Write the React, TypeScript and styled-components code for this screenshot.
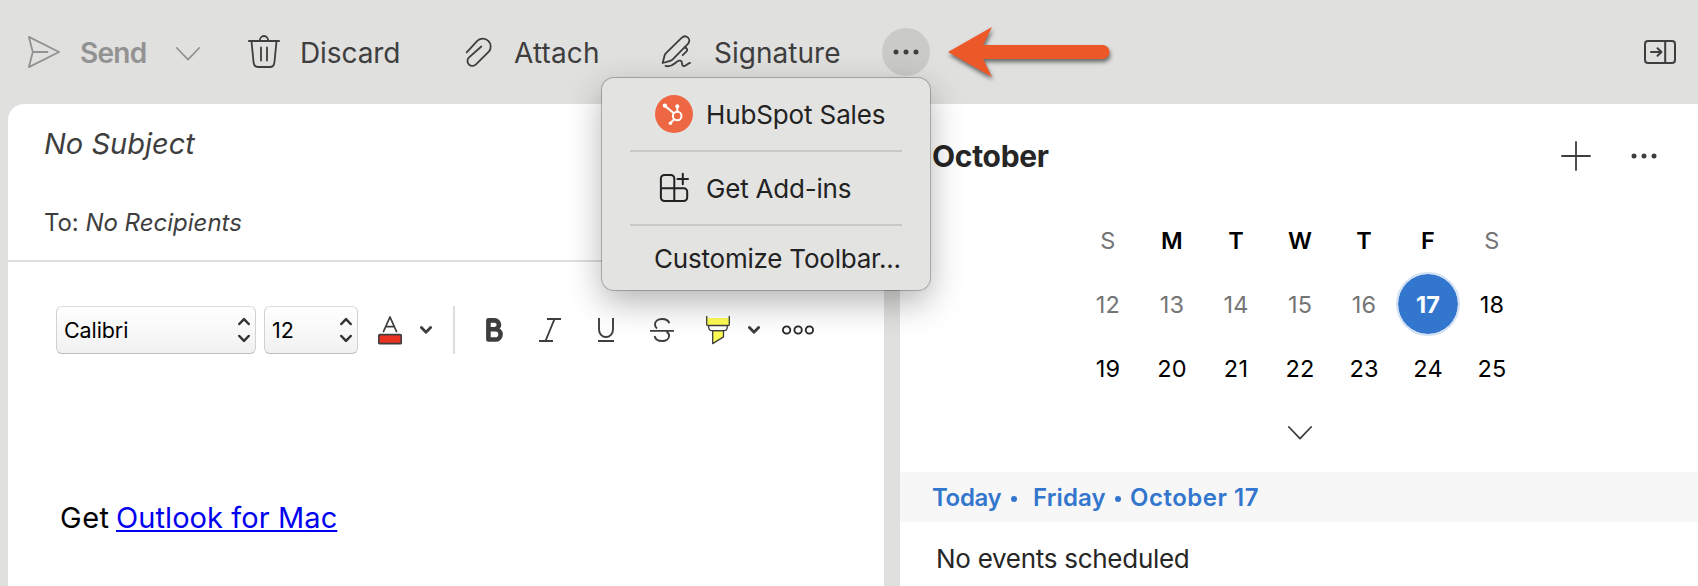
import React from "react";
import styled, { createGlobalStyle } from "styled-components";

const GlobalStyle = createGlobalStyle`
  *, *::before, *::after { box-sizing: border-box; }
  body {
    margin: 0;
    overflow: hidden;
    font-family: Inter, "Liberation Sans", sans-serif;
    color: #262626;
  }
`;

const Window = styled.div`
  display: flex;
  flex-direction: column;
  height: 586px;
  background: #e0e0de;
  overflow: hidden;
`;

const Icon = styled.svg<{ $stroke?: number }>`
  display: block;
  flex: none;
  fill: none;
  stroke: currentColor;
  stroke-width: ${(p) => p.$stroke ?? 1.8};
  stroke-linecap: round;
  stroke-linejoin: round;
`;

/* ---------- Toolbar ---------- */

const Toolbar = styled.header`
  display: flex;
  align-items: center;
  flex: none;
  height: 104px;
  padding: 0 22px 0 28px;
`;

const ToolButton = styled.div<{ $width: number; $gap: number; $disabled?: boolean }>`
  display: flex;
  align-items: center;
  flex: none;
  gap: ${(p) => p.$gap}px;
  width: ${(p) => p.$width}px;
  color: ${(p) => (p.$disabled ? "#929292" : "#3e3e3e")};
`;

const ToolLabel = styled.span<{ $tracking?: number; $bold?: boolean }>`
  font-size: 28px;
  line-height: 34px;
  padding-top: 2px;
  font-weight: ${(p) => (p.$bold ? 600 : 440)};
  letter-spacing: ${(p) => p.$tracking ?? 0}px;
  white-space: nowrap;
`;

const SendArrow = styled.div`
  margin-left: 9px;
  padding-top: 3px;
`;

const MoreAnchor = styled.div`
  position: relative;
  flex: none;
  z-index: 2;
`;

const MoreButton = styled.div`
  display: grid;
  place-items: center;
  width: 48px;
  height: 48px;
  border-radius: 50%;
  background: #cacac8;
  color: #3e3e3e;
`;

const Pointer = styled.svg`
  display: block;
  flex: none;
  margin-left: 18px;
  overflow: visible;
  filter: drop-shadow(1px 3px 2px rgba(0, 0, 0, 0.55));
`;

const PanelToggle = styled.div`
  margin-left: auto;
  color: #3e3e3e;
`;

/* ---------- Overflow menu ---------- */

const Menu = styled.div`
  position: absolute;
  top: 50px;
  right: 0;
  width: 328px;
  height: 212px;
  padding: 0 28px;
  border-radius: 12px;
  background: #e3e3e1;
  box-shadow:
    0 0 0 1px rgba(0, 0, 0, 0.24),
    0 12px 34px rgba(0, 0, 0, 0.3);
`;

const MenuItem = styled.div<{ $height: number; $tracking: number; $inset?: number }>`
  display: flex;
  align-items: center;
  height: ${(p) => p.$height}px;
  padding-left: ${(p) => p.$inset ?? 25}px;
  font-size: 26px;
  font-weight: 420;
  letter-spacing: ${(p) => p.$tracking}px;
  white-space: nowrap;
  color: #222;
`;

const MenuIcon = styled.div<{ $inset?: number }>`
  flex: none;
  width: 51px;
  padding-left: ${(p) => p.$inset ?? 0}px;
`;

const MenuText = styled.span`
  padding-top: 1px;
`;

const MenuDivider = styled.div`
  height: 2px;
  background: #c9c9c7;
`;

/* ---------- Compose pane ---------- */

const Body = styled.div`
  display: flex;
  flex: 1;
  gap: 16px;
  padding-left: 8px;
`;

const Compose = styled.main`
  display: flex;
  flex-direction: column;
  width: 876px;
  background: #fff;
  border-top-left-radius: 16px;
`;

const Subject = styled.div`
  height: 80px;
  padding: 0 36px;
  font-size: 29px;
  font-style: italic;
  font-weight: 440;
  line-height: 79px;
  color: #3e3e3e;
`;

const Recipients = styled.div`
  height: 78px;
  padding: 0 36px;
  border-bottom: 2px solid #dededc;
  font-size: 24px;
  font-weight: 430;
  line-height: 77px;
  color: #3e3e3e;
  white-space: pre;

  span { letter-spacing: -0.1px; }
`;

const FormatBar = styled.div`
  display: flex;
  align-items: center;
  height: 48px;
  margin: 44px 0 0 48px;
  color: #3e3e3e;
`;

const Select = styled.div<{ $width: number }>`
  display: flex;
  align-items: center;
  justify-content: space-between;
  flex: none;
  width: ${(p) => p.$width}px;
  height: 48px;
  margin-right: 8px;
  padding: 0 5px 0 7px;
  border: 1px solid #d2d2d2;
  border-top-color: #dcdcdc;
  border-bottom-color: #bcbcbc;
  border-radius: 6px;
  background: linear-gradient(#fff, #f1f1f1);
  font-size: 21.5px;
  font-weight: 420;
  letter-spacing: -0.1px;
  color: #000;
`;

const Slot = styled.div<{ $left: number }>`
  flex: none;
  margin-left: ${(p) => p.$left}px;
`;

const BarDivider = styled.div`
  flex: none;
  width: 2px;
  height: 48px;
  margin-left: 21px;
  background: #dcdcdc;
`;

const Message = styled.div`
  margin: 146px 0 0 52px;
  font-size: 29px;
  line-height: 35px;
  font-weight: 440;
  color: #000;
  white-space: nowrap;
`;

const GetWord = styled.span`
  display: inline-block;
  width: 56px;
  letter-spacing: 0.5px;
`;

const Link = styled.a`
  color: #0000f0;
  letter-spacing: 0.08px;
  text-decoration: underline;
  text-decoration-thickness: 2px;
  text-underline-offset: 2px;
  text-decoration-skip-ink: none;
`;

/* ---------- Calendar pane ---------- */

const Sidebar = styled.aside`
  display: flex;
  flex-direction: column;
  width: 798px;
  background: #fff;
`;

const MonthBar = styled.div`
  display: flex;
  align-items: center;
  height: 104px;
  padding: 0 40px 0 32px;
  color: #3e3e3e;
`;

const Month = styled.h2`
  flex: 1;
  margin: 0;
  font-size: 30px;
  font-weight: 650;
  letter-spacing: -0.3px;
  color: #262626;
`;

const Grid = styled.div`
  display: grid;
  grid-template-columns: repeat(7, 64px);
  grid-auto-rows: 64px;
  margin-left: 176px;
`;

const Cell = styled.div<{ $muted?: boolean; $bold?: boolean }>`
  display: grid;
  place-items: center;
  padding-top: 1px;
  font-size: 23.5px;
  font-weight: ${(p) => (p.$bold ? 600 : 440)};
  letter-spacing: 0.2px;
  color: ${(p) => (p.$muted ? "#757575" : "#000")};
`;

const Today = styled.div`
  display: grid;
  place-items: center;
  width: 64px;
  height: 64px;
  margin-top: -1px;
  border: 2px solid #d3e2f5;
  border-radius: 50%;
  background: #3376cd;
  background-clip: padding-box;
  font-weight: 700;
  color: #fff;
`;

const Expand = styled.div`
  height: 72px;
  padding: 26px 0 0 388px;
  color: #3e3e3e;
`;

const DayBand = styled.div`
  display: flex;
  align-items: center;
  height: 50px;
  padding-left: 32px;
  background: #f7f7f7;
  font-size: 24px;
  font-weight: 640;
  color: #3376cd;
  white-space: nowrap;
`;

const DayPart = styled.span<{ $width: number; $tracking: number }>`
  flex: none;
  width: ${(p) => p.$width}px;
  letter-spacing: ${(p) => p.$tracking}px;
`;

const Bullet = styled.i<{ $right: number }>`
  flex: none;
  width: 6px;
  height: 6px;
  margin: 3px ${(p) => p.$right}px 0 0;
  border-radius: 50%;
  background: currentColor;
`;

const Empty = styled.div`
  padding: 21px 0 0 36px;
  font-size: 26px;
  line-height: 32px;
  font-weight: 420;
  letter-spacing: -0.28px;
  color: #262626;
`;

/* ---------- Drawings ---------- */

const Dots = () => (
  <Icon width="28" height="6" viewBox="0 0 28 6">
    <g fill="currentColor" stroke="none">
      <circle cx="4" cy="3" r="2.5" />
      <circle cx="14" cy="3" r="2.5" />
      <circle cx="24" cy="3" r="2.5" />
    </g>
  </Icon>
);

const Chevron = () => (
  <Icon width="24" height="14" viewBox="0 0 24 14">
    <path d="M.9 1 12 12.6 23.1 1" />
  </Icon>
);

const SmallChevron = () => (
  <Icon width="12" height="8" viewBox="0 0 12 8" $stroke={2.8}>
    <path d="m1.4 1.5 4.6 4.7 4.6-4.7" />
  </Icon>
);

const StepperIcon = styled(Icon)`
  color: #333;
`;

const Stepper = () => (
  <StepperIcon width="12" height="28" viewBox="0 0 12 28" $stroke={2.5}>
    <path d="M1.3 8 6 3.2 10.7 8M1.3 20 6 24.8 10.7 20" />
  </StepperIcon>
);

const SendIcon = () => (
  <Icon width="32" height="34" viewBox="0 0 32 34">
    <path d="M.9 1.9 31 17 .9 32.1 4.8 17zM4.8 17h14.7" />
  </Icon>
);

const TrashIcon = () => (
  <Icon width="32" height="36" viewBox="0 0 32 36">
    <path d="M.9 7h30.2M11.7 7a4.3 5 0 0 1 8.6 0M3.5 7l2 20.8c.4 3.8 1.6 5.2 4.6 5.2h11.8c3 0 4.2-1.4 4.6-5.2L28.5 7M13 13.5v13M19 13.5v13" />
  </Icon>
);

const ClipIcon = () => (
  <Icon width="30" height="32" viewBox="0 0 30 32">
    <path d="M2.7 16.4 13.5 4.7a7.9 7.9 0 0 1 11.3 11L12 28.4a4.9 4.9 0 0 1-7.2-6.8L17.3 10.5" />
  </Icon>
);

const PenIcon = () => (
  <Icon width="34" height="34" viewBox="0 0 34 34">
    <path d="M1.7 28 3.5 20.7c.3-1 .7-1.7 1.5-2.5L20.3 3.1c4.8-4.6 11 1.3 6.4 6L11.7 24.4c-.8.8-1.5 1.2-2.5 1.5zM23.5 11.9c2.7 1.5 3.5 3 1.8 4.7l-3.6 3.6M4.5 30.9c7 2.2 9.2-3.9 13.4-5.2 5-1 1.400 5.200 5 5.400 2.300.2 3.700-2.800 6.200-3.300" />
  </Icon>
);

const HubSpotIcon = () => (
  <Icon width="38" height="38" viewBox="0 0 38 38" $stroke={2}>
    <circle cx="19" cy="19" r="19" fill="#ee6743" stroke="none" />
    <g stroke="#fff">
      <circle cx="22.2" cy="21" r="4.3" />
      <path d="M22.3 16.5v-5M18.5 18 9.8 10.7M19 24.4l-3.5 3.6" />
    </g>
    <g fill="#fff" stroke="none">
      <circle cx="22.3" cy="11.3" r="2" />
      <circle cx="9.9" cy="10.6" r="2.2" />
      <circle cx="15.4" cy="28.2" r="1.8" />
    </g>
  </Icon>
);

const AddInsIcon = () => (
  <Icon width="32" height="32" viewBox="0 0 32 32" $stroke={2}>
    <path d="M2.9 16.2V6.5a3.500 3.500 0 0 1 3.500-3.500h6.400a3.500 3.500 0 0 1 3.500 3.500V29H6.400a3.500 3.500 0 0 1-3.500-3.500zH25.700a3.500 3.500 0 0 1 3.500 3.500v5.800a3.500 3.500 0 0 1-3.500 3.500h-9.400M19.500 7H30M24.800 1.800v10.500" />
  </Icon>
);

const FontColorIcon = () => (
  <Icon width="24" height="30" viewBox="0 0 24 30">
    <path d="M5.5 16.5 12 2l6.5 14.5M7.8 11.7h8.4" />
    <rect x=".7" y="19.7" width="22.6" height="9" rx="1.5" fill="#ea3223" />
  </Icon>
);

const SquareIcon = styled(Icon)`
  stroke-linecap: butt;
`;

const HighlighterIcon = () => (
  <Icon width="24" height="30" viewBox="0 0 24 30" $stroke={1.3}>
    <path d="M.8 3h22.4v7.3H.8z" fill="#fffd54" stroke="none" />
    <path d="M6.7 15.7h10.8v6.2L6.7 28.6z" fill="#fffd54" />
    <path d="M.7 1.3v8.2q0 1 1 1h20.6q1 0 1-1V1.3M2.6 10.5c0 3 .8 5.2 3 5.2h12.8c2.2 0 3-2.2 3-5.2" />
  </Icon>
);

/* ---------- Page ---------- */

const weekdays = ["S", "M", "T", "W", "T", "F", "S"];
const dates = [12, 13, 14, 15, 16, 17, 18, 19, 20, 21, 22, 23, 24, 25];
const today = 17;

export default function App() {
  return (
    <Window>
      <GlobalStyle />
      <Toolbar>
        <ToolButton $width={220} $gap={20} $disabled>
          <SendIcon />
          <ToolLabel $bold $tracking={-0.7}>Send</ToolLabel>
          <SendArrow>
            <Chevron />
          </SendArrow>
        </ToolButton>
        <ToolButton $width={216} $gap={20}>
          <TrashIcon />
          <ToolLabel $tracking={-0.1}>Discard</ToolLabel>
        </ToolButton>
        <ToolButton $width={197} $gap={20}>
          <ClipIcon />
          <ToolLabel $tracking={0.15}>Attach</ToolLabel>
        </ToolButton>
        <ToolButton $width={221} $gap={19}>
          <PenIcon />
          <ToolLabel $tracking={0.03}>Signature</ToolLabel>
        </ToolButton>
        <MoreAnchor>
          <MoreButton>
            <Dots />
          </MoreButton>
          <Menu>
            <MenuItem $height={72} $tracking={-0.13}>
              <MenuIcon><HubSpotIcon /></MenuIcon>
              <MenuText>HubSpot Sales</MenuText>
            </MenuItem>
            <MenuDivider />
            <MenuItem $height={72} $tracking={-0.2}>
              <MenuIcon $inset={3}><AddInsIcon /></MenuIcon>
              <MenuText>Get Add-ins</MenuText>
            </MenuItem>
            <MenuDivider />
            <MenuItem $height={64} $tracking={-0.21} $inset={24}>
              <MenuText>Customize Toolbar...</MenuText>
            </MenuItem>
          </Menu>
        </MoreAnchor>
        <Pointer width="162" height="50" viewBox="0 0 162 50">
          <path d="M0 25 44 0 35 18H154.5a7 7 0 0 1 0 14H35L44 50z" fill="#ed5828" />
        </Pointer>
        <PanelToggle>
          <Icon width="32" height="24" viewBox="0 0 32 24" $stroke={2}>
            <rect x="1" y="1" width="30" height="22" rx="3" />
            <path d="M21.2 1v22M7 12h10.5M13.5 8.3l4 3.7-4 3.7" />
          </Icon>
        </PanelToggle>
      </Toolbar>

      <Body>
        <Compose>
          <Subject>No Subject</Subject>
          <Recipients><span>To:</span> <em>No Recipients</em></Recipients>
          <FormatBar>
            <Select $width={200}>Calibri<Stepper /></Select>
            <Select $width={94}>12<Stepper /></Select>
            <Slot $left={12}><FontColorIcon /></Slot>
            <Slot $left={18}><SmallChevron /></Slot>
            <BarDivider />
            <Slot $left={31}>
              <Icon width="17" height="24" viewBox="0 0 17 24" $stroke={4.6}>
                <path d="M2.4 2.4H8.5a4.3 4.3 0 0 1 0 8.9H2.4zM2.4 11.3H9.5a4.9 4.9 0 0 1 0 10.2H2.4z" />
              </Icon>
            </Slot>
            <Slot $left={36}>
              <SquareIcon width="22" height="24" viewBox="0 0 22 24" $stroke={1.9}>
                <path d="M8 1h14M0 23h14M15.5 1l-9 22" />
              </SquareIcon>
            </Slot>
            <Slot $left={37}>
              <SquareIcon width="16" height="24" viewBox="0 0 16 24" $stroke={1.9}>
                <path d="M1 0v11.5a7 7.5 0 0 0 14 0V0M0 23h16" />
              </SquareIcon>
            </Slot>
            <Slot $left={36}>
              <SquareIcon width="24" height="24" viewBox="0 0 24 24" $stroke={1.9}>
                <path d="M19.2 5.3C18.5 2.3 15.7 1 12 1 8 1 5 3 5 6.6c0 1.8.8 3 2 4M16.5 13.9c1.7.8 2.6 1.9 2.6 3.8 0 3.5-3.2 5.3-7.1 5.3-4 0-6.7-1.7-7.4-5M0 12.9h24" />
              </SquareIcon>
            </Slot>
            <Slot $left={32}><HighlighterIcon /></Slot>
            <Slot $left={18}><SmallChevron /></Slot>
            <Slot $left={22}>
              <Icon width="32" height="10" viewBox="0 0 32 10" color="#262626">
                <circle cx="4.6" cy="5" r="3.7" />
                <circle cx="16.1" cy="5" r="3.7" />
                <circle cx="27.4" cy="5" r="3.7" />
              </Icon>
            </Slot>
          </FormatBar>
          <Message>
            <GetWord>Get</GetWord>
            <Link>Outlook for Mac</Link>
          </Message>
        </Compose>

        <Sidebar>
          <MonthBar>
            <Month>October</Month>
            <Icon width="30" height="30" viewBox="0 0 30 30">
              <path d="M1 15h28M15 1v28" />
            </Icon>
            <Slot $left={39}><Dots /></Slot>
          </MonthBar>
          <Grid>
            {weekdays.map((d, i) => (
              <Cell key={i} $muted={i % 6 === 0} $bold={i % 6 !== 0}>{d}</Cell>
            ))}
            {dates.map((d) => (
              <Cell key={d} $muted={d < today}>
                {d === today ? <Today>{d}</Today> : d}
              </Cell>
            ))}
          </Grid>
          <Expand><Chevron /></Expand>
          <DayBand>
            <DayPart $width={79} $tracking={-0.35}>Today</DayPart>
            <Bullet $right={16} />
            <DayPart $width={82} $tracking={0.1}>Friday</DayPart>
            <Bullet $right={9} />
            <DayPart $width={130} $tracking={0.5}>October 17</DayPart>
          </DayBand>
          <Empty>No events scheduled</Empty>
        </Sidebar>
      </Body>
    </Window>
  );
}
